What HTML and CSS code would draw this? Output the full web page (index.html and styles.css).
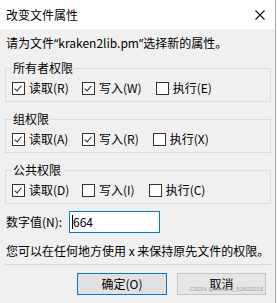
FILE: index.html
```html
<!DOCTYPE html>
<html lang="zh">
<head>
<meta charset="utf-8">
<link rel="stylesheet" href="styles.css">
</head>
<body>
<div class="window">
  <div class="titlebar">
    <span class="title">改变文件属性</span>
    <svg class="close" width="10" height="10" viewBox="0 0 10 10"><path d="M0.5 0.5 L9.5 9.5 M9.5 0.5 L0.5 9.5" stroke="#111" stroke-width="1.1" fill="none"/></svg>
  </div>
  <div class="content">
    <p class="intro">请为文件<span class="q">“</span>kraken2lib.pm<span class="q">”</span>选择新的属性。</p>
    <fieldset class="group">
      <legend>所有者权限</legend>
      <div class="row">
        <label class="item first"><span class="box checked"></span>读取(R)</label>
        <label class="item"><span class="box checked"></span>写入(W)</label>
        <label class="item"><span class="box"></span>执行(E)</label>
      </div>
    </fieldset>
    <fieldset class="group">
      <legend>组权限</legend>
      <div class="row">
        <label class="item first"><span class="box checked"></span>读取(A)</label>
        <label class="item"><span class="box checked"></span>写入(R)</label>
        <label class="item"><span class="box"></span>执行(X)</label>
      </div>
    </fieldset>
    <fieldset class="group">
      <legend>公共权限</legend>
      <div class="row">
        <label class="item first"><span class="box checked"></span>读取(D)</label>
        <label class="item"><span class="box"></span>写入(I)</label>
        <label class="item"><span class="box"></span>执行(C)</label>
      </div>
    </fieldset>
    <div class="numrow">
      <span class="numlabel">数字值(N):</span>
      <div class="input"><span class="caret"></span>664</div>
    </div>
    <p class="help">您可以在任何地方使用 x 来保持原先文件的权限。</p>
    <div class="sep"></div>
    <div class="buttons">
      <div class="btn ok">确定(O)</div>
      <div class="btn cancel">取消<span class="watermark">CSDN @Nelson_52602016</span></div>
    </div>
  </div>
</div>
</body>
</html>
```
FILE: styles.css
```css
html, body {
  margin: 0;
  padding: 0;
  background: #ffffff;
}
body {
  font-family: "Noto Sans CJK SC", "Noto Sans", sans-serif;
  font-size: 12px;
  color: #000;
}
.window {
  width: 275px;
  height: 303px;
  border-right: 1px solid #a8a8a8;
  background: #f0f0f0;
  overflow: hidden;
}
.titlebar {
  height: 29px;
  background: #fff;
  display: flex;
  align-items: center;
  padding-left: 6px;
  position: relative;
}
.title {
  line-height: 16px;
}
.close {
  margin-left: auto;
  margin-right: 10px;
  margin-top: 1px;
}
.content {
  padding: 0 4px 0 5px;
}
.intro {
  margin: 6px 0 0 1px;
  line-height: 16px;
}
.q {
  font-family: "Noto Sans", sans-serif;
}
.group {
  margin: 9px 0 0 0;
  border: 1px solid #dcdcdc;
  padding: 0 0 5px 6px;
  width: 266px;
  box-sizing: border-box;
}
.group:first-of-type {
  margin-top: 8px;
}
.group legend {
  padding: 0 1px;
  line-height: 16px;
}
.row {
  display: flex;
  align-items: center;
  height: 16px;
  margin-top: 4px;
}
.item {
  display: flex;
  align-items: center;
  line-height: 16px;
  margin-right: 14px;
  white-space: nowrap;
}
.item.first {
  width: 70px;
  margin-right: 0;
}
.box {
  width: 11px;
  height: 11px;
  border: 1px solid #333;
  background: #fff;
  margin-right: 4px;
  position: relative;
  flex: none;
}
.box.checked::after {
  content: "";
  position: absolute;
  left: 3px;
  top: 1px;
  width: 3px;
  height: 6px;
  border-right: 1px solid #222;
  border-bottom: 1px solid #222;
  transform: rotate(40deg);
}
.numrow {
  display: flex;
  align-items: center;
  margin-top: 7px;
}
.numlabel {
  width: 63px;
  padding-left: 1px;
  line-height: 16px;
}
.input {
  width: 87px;
  height: 20px;
  border: 1px solid #0078d7;
  background: #fff;
  display: flex;
  align-items: center;
  padding-left: 2px;
  box-sizing: content-box;
  line-height: 16px;
}
.caret {
  width: 1px;
  height: 14px;
  background: #000;
}
.help {
  margin: 10px 0 0 1px;
  line-height: 16px;
}
.sep {
  width: 266px;
  height: 1px;
  background: #d6d6d6;
  margin-top: 5px;
}
.buttons {
  display: flex;
  justify-content: flex-end;
  gap: 10px;
  padding-right: 5px;
  margin-top: 8px;
}
.btn {
  height: 20px;
  line-height: 20px;
  text-align: center;
  background: #e1e1e1;
  border: 1px solid #adadad;
  position: relative;
}
.btn.ok {
  width: 88px;
  border-color: #0078d7;
}
.btn.cancel {
  width: 87px;
  background: #e5e5e5;
  border-color: #c4c4c4;
}
.watermark {
  position: absolute;
  right: 2px;
  bottom: 1px;
  font-family: "Liberation Sans", sans-serif;
  font-size: 6px;
  line-height: 7px;
  color: #a0a0a0;
  white-space: nowrap;
}
```
